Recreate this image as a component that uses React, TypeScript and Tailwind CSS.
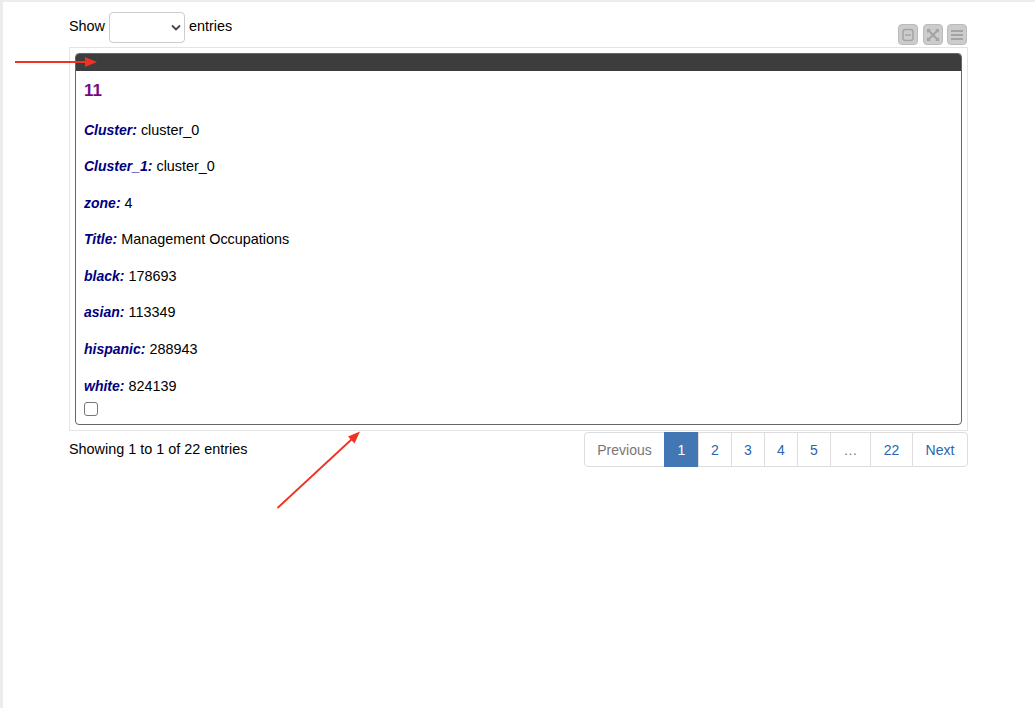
const fields = [
  { label: 'Cluster:', value: 'cluster_0' },
  { label: 'Cluster_1:', value: 'cluster_0' },
  { label: 'zone:', value: '4' },
  { label: 'Title:', value: 'Management Occupations' },
  { label: 'black:', value: '178693' },
  { label: 'asian:', value: '113349' },
  { label: 'hispanic:', value: '288943' },
  { label: 'white:', value: '824139' },
]

const pages = ['2', '3', '4', '5']

function PageLink({ children, className = '' }: { children: React.ReactNode; className?: string }) {
  return (
    <a className={`-ml-px flex h-[35px] items-center justify-center border pt-px ${className}`}>
      {children}
    </a>
  )
}

function ToolButton({ children }: { children: React.ReactNode }) {
  return (
    <button className="flex h-[21px] w-[20px] items-center justify-center rounded-[4px] border border-[#bbb] bg-[#ccc]">
      <svg width="14" height="14" viewBox="0 0 14 14" fill="none" stroke="#a4a4a4" strokeWidth="1.5">
        {children}
      </svg>
    </button>
  )
}

export default function App() {
  return (
    <div className="relative h-[708px] w-[1035px] overflow-hidden bg-[#ececec] pl-[3px] pt-[2px] font-['Liberation_Sans',Arial,sans-serif] text-[14.4px] text-black">
      <div className="h-full bg-white pl-[66px] pr-[67px] pt-[10px]">
        <div className="flex h-[35px] justify-between pb-[2px]">
          <div className="flex h-[31px] items-center">
            <span className="pb-[2px]">Show</span>
            <div className="relative mx-[4px] h-[31px] w-[76px] rounded-[4px] border border-[#ccc] bg-white">
              <svg className="absolute right-[3px] top-[11px]" width="10" height="8" viewBox="0 0 10 8" fill="none" stroke="#444" strokeWidth="1.8">
                <path d="M1 1.5 5 5.5 9 1.5" />
              </svg>
            </div>
            <span className="pb-[2px]">entries</span>
          </div>
          <div className="flex items-end gap-[4.5px] pr-px">
            <ToolButton>
              <rect x="2" y="1.5" width="10" height="11" rx="2.5" />
              <path d="M4 7h6" />
            </ToolButton>
            <ToolButton>
              <path d="M1.5 1.5 12.5 12.5M12.5 1.5 1.5 12.5" strokeWidth="2" />
              <path d="M1 1h4L1 5zM13 1H9l4 4zM1 13h4l-4-4zM13 13H9l4-4z" fill="#a4a4a4" stroke="none" />
            </ToolButton>
            <ToolButton>
              <path d="M1 3h12M1 7h12M1 11h12" strokeWidth="1.8" />
            </ToolButton>
          </div>
        </div>

        <div className="h-[384px] border border-[#e4e4e4] p-[5px]">
          <div className="h-[372px] overflow-hidden rounded-[4px] border border-[#666]">
            <div className="h-[17px] bg-[#3d3d3d]" />
            <div className="px-[8px]">
              <h3 className="mt-[11px] text-[17px] font-bold leading-[18px] text-[#760a7f]">11</h3>
              <div className="mt-[19.5px]">
                {fields.map((f) => (
                  <p key={f.label} className="mb-[16.6px] h-[20px] leading-[20px]">
                    <b className="text-[14px] italic text-[#000080]">{f.label}</b> {f.value}
                  </p>
                ))}
              </div>
              <div className="-mt-[10px] h-[14px] w-[14px] rounded-[3px] border border-[#767676] bg-white" />
            </div>
          </div>
        </div>

        <div className="flex items-start justify-between">
          <div className="pt-[8px] leading-[20px]">Showing 1 to 1 of 22 entries</div>
          <div className="mt-px flex text-[14px] text-[#2a64ad]">
            <PageLink className="ml-0 w-[81px] rounded-l-[4px] border-[#ddd] bg-white text-[#777]">Previous</PageLink>
            <PageLink className="w-[35px] border-[#4277b3] bg-[#4277b3] text-white">1</PageLink>
            {pages.map((p) => (
              <PageLink key={p} className="w-[34px] border-[#ddd] bg-white">{p}</PageLink>
            ))}
            <PageLink className="w-[41px] border-[#ddd] bg-white text-[#777]">…</PageLink>
            <PageLink className="w-[43px] border-[#ddd] bg-white">22</PageLink>
            <PageLink className="w-[56px] rounded-r-[4px] border-[#ddd] bg-white">Next</PageLink>
          </div>
        </div>
      </div>

      {/* annotation arrows */}
      <svg className="absolute left-0 top-0" width="1035" height="708" fill="none">
        <path d="M15 62H86" stroke="#ee3322" strokeWidth="1.8" />
        <path d="M97 62 85 57V67Z" fill="#ee3322" />
        <path d="M277.5 508 352 439" stroke="#ee3322" strokeWidth="1.8" />
        <path d="M360 431.5 348 436.5 354.5 443.5Z" fill="#ee3322" />
      </svg>
    </div>
  )
}
